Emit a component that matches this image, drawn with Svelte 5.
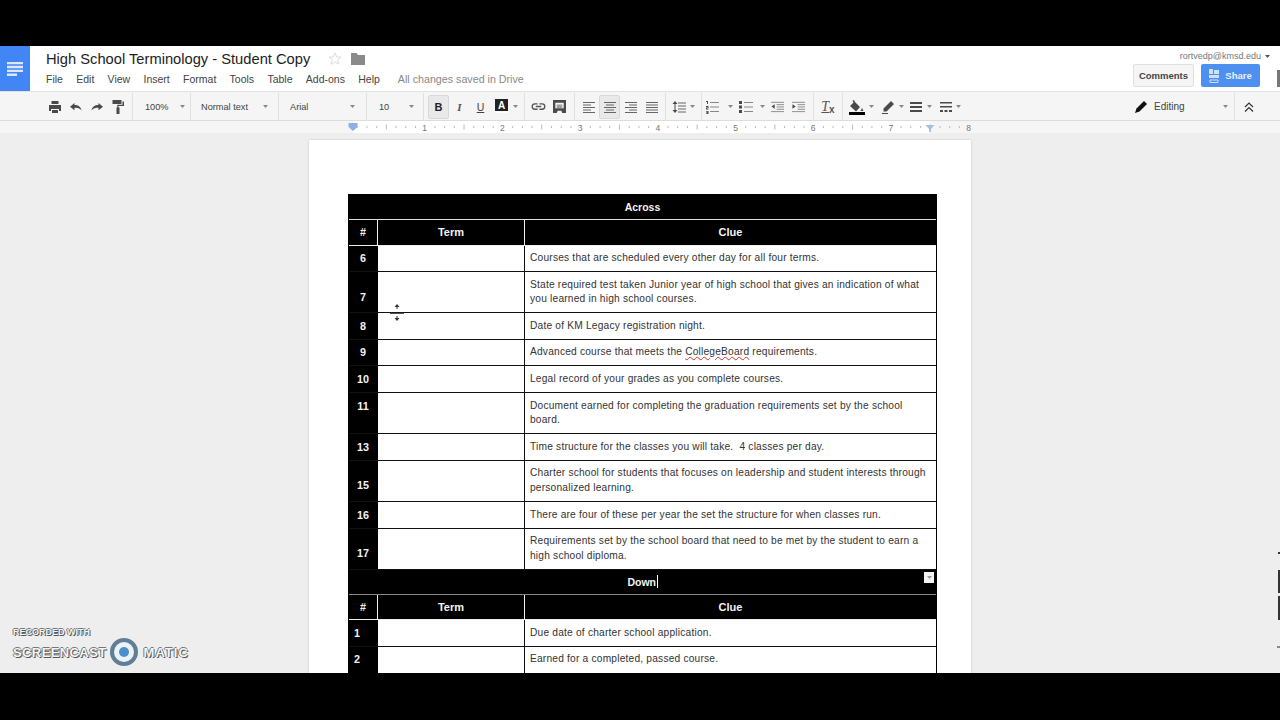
<script>
  const menus = ['File','Edit','View','Insert','Format','Tools','Table','Add-ons','Help'];
  const across = [
    { n:'6', a:'mid', lines:['Courses that are scheduled every other day for all four terms.'] },
    { n:'7', a:'end', lines:['State required test taken Junior year of high school that gives an indication of what','you learned in high school courses.'] },
    { n:'8', a:'mid', lines:['Date of KM Legacy registration night.'] },
    { n:'9', a:'mid', board:true },
    { n:'10', a:'mid', lines:['Legal record of your grades as you complete courses.'] },
    { n:'11', a:'tp', lines:['Document earned for completing the graduation requirements set by the school','board.'] },
    { n:'13', a:'mid', lines:['Time structure for the classes you will take.\u00a0 4 classes per day.'] },
    { n:'15', a:'end', lines:['Charter school for students that focuses on leadership and student interests through','personalized learning.'] },
    { n:'16', a:'mid', lines:['There are four of these per year the set the structure for when classes run.'] },
    { n:'17', a:'end', lines:['Requirements set by the school board that need to be met by the student to earn a','high school diploma.'] }
  ];
  const down = [
    { n:'1', lines:['Due date of charter school application.'] },
    { n:'2', lines:['Earned for a completed, passed course.'] }
  ];
  const inch = 77.7;
  const rulerTicks = [];
  for (let i = 0; i <= 64; i++) {
    if (i % 8 === 0) continue;
    const h = i % 4 === 0 ? 5 : 2;
    rulerTicks.push({ x: 347 + (i / 8) * inch, h });
  }
  const rulerNums = [1,2,3,4,5,6,7,8];
</script>

{#snippet arrow()}
  <svg class="arr" viewBox="0 0 5 3" width="5" height="3"><path d="M0 0h5L2.5 3z"/></svg>
{/snippet}

{#snippet lines(d)}
  <svg class="ic" viewBox="0 0 14 14" width="14" height="14"><path class="ln" d={d}/></svg>
{/snippet}

<div class="app">
  <div class="blackbar bar-top"></div>

  <header class="head">
    <div class="logo">
      <svg viewBox="0 0 16 12" width="16" height="14" preserveAspectRatio="none"><path d="M0 0h16v2H0zM0 3.300h16v2H0zM0 6.600h16v2H0zM0 9.900h10v2H0z"/></svg>
    </div>
    <div class="titles">
      <div class="titlerow">
        <span class="title">High School Terminology - Student Copy</span>
        <svg class="star" viewBox="0 0 14 14" width="14" height="14"><path d="M7 1l1.800 4h4.200l-3.300 2.800 1.200 4.400L7 9.800l-3.900 2.400 1.200-4.400L1 5h4.200z"/></svg>
        <svg class="folder" viewBox="0 0 14 12" width="14" height="12"><path d="M0 0h5.500l1.500 2H14v10H0z"/></svg>
      </div>
      <nav class="menu">
        {#each menus as m}<span>{m}</span>{/each}
        <span class="saved">All changes saved in Drive</span>
      </nav>
    </div>
    <div class="account">
      <div class="email">rortvedp@kmsd.edu <svg class="arr dark" viewBox="0 0 5 3" width="5" height="3"><path d="M0 0h5L2.500 3z"/></svg></div>
      <div class="btns">
        <span class="comments">Comments</span>
        <span class="share">
          <svg viewBox="0 0 10 14" width="10" height="14"><path d="M0 0h4v5H0zM5 1h5v4H5zM0 6h10v3H0z" fill="#cfe0fb"/><path d="M1 11h8v2.500H1z" fill="none" stroke="#cfe0fb"/></svg>
          Share
        </span>
      </div>
    </div>
    <span class="sliver"></span>
  </header>

  <div class="toolbar">
    <div class="tg g1">
      <span class="ib"><svg class="ic" viewBox="0 0 14 14" width="14" height="14"><path d="M3.500 1h7v3h-7zM1 5h12v6h-2V9H3v2H1zM4 10h6v3H4z"/></svg></span>
      <span class="ib"><svg class="ic" viewBox="0 0 14 14" width="14" height="14"><path d="M5.500 3L1 6.700l4.500 3.600V8c3-.5 5.300.4 7 2.600C12 7 9.300 5 5.500 5z"/></svg></span>
      <span class="ib"><svg class="ic" viewBox="0 0 14 14" width="14" height="14"><path d="M8.500 3l4.500 3.700-4.500 3.600V8c-3-.5-5.300.4-7 2.600C2 7 4.700 5 8.500 5z"/></svg></span>
      <span class="ib"><svg class="ic" viewBox="0 0 14 14" width="14" height="14"><path d="M1.500 0h9v4h-9zM11.500 1.500H13V6H7.500v1.500H8.500V14h-3V7.500h.8V4.800H11.500z"/></svg></span>
    </div>
    <div class="tg g2"><span class="lab">100%</span>{@render arrow()}</div>
    <div class="tg g3"><span class="lab">Normal text</span>{@render arrow()}</div>
    <div class="tg g4"><span class="lab arial">Arial</span>{@render arrow()}</div>
    <div class="tg g5"><span class="lab">10</span>{@render arrow()}</div>
    <div class="tg g6">
      <span class="ib on b">B</span>
      <span class="ib i">I</span>
      <span class="ib u">U</span>
      <span class="ib a"><span class="ablk">A</span></span>
      <span class="tarr">{@render arrow()}</span>
    </div>
    <div class="tg g7">
      <span class="ib"><svg class="ic" viewBox="0 0 16 10" width="15" height="9"><path class="ln thick" d="M7 2H4a3 3 0 0 0 0 6h3M9 2h3a3 3 0 0 1 0 6H9M5 5h6"/></svg></span>
      <span class="ib"><svg class="ic" viewBox="0 0 14 14" width="13" height="13"><path d="M0 0h14v14H10l-1-2.500H5L4 14H0zM2.500 3v6h9V3zM4 5h6v1H4zM4 7h6v1H4z" fill-rule="evenodd"/></svg></span>
    </div>
    <div class="tg g8">
      <span class="ib">{@render lines('M1 2.500h12M1 5h8M1 7.500h12M1 10h8M1 12.500h12')}</span>
      <span class="ib on">{@render lines('M1 2.500h12M3 5h8M1 7.500h12M3 10h8M1 12.500h12')}</span>
      <span class="ib">{@render lines('M1 2.500h12M5 5h8M1 7.500h12M5 10h8M1 12.500h12')}</span>
      <span class="ib">{@render lines('M1 2.500h12M1 5h12M1 7.500h12M1 10h12M1 12.500h12')}</span>
    </div>
    <div class="tg g9">
      <span class="ib"><svg class="ic" viewBox="0 0 14 14" width="14" height="14"><path class="ln" d="M6 3h8M6 6h8M6 9h8M6 12h8"/><path d="M3 1l2.500 3h-2v6h2L3 13 .5 10h2V4h-2z"/></svg></span>
      <span class="tarr">{@render arrow()}</span>
    </div>
    <div class="tg g10">
      <span class="ib n"><svg class="ic" viewBox="0 0 14 14" width="14" height="14"><path class="ln light" d="M5 2.500h9M5 7h9M5 11.500h9"/><path d="M1 1h2v3H2V2H1zM1 6h2.500v2H2v.5h1.500V9.500H1V7.500h1.500V7H1zM1 11h2.500v3H1v-.8h1.500v-.3H1.500v-.8h1v-.3H1z"/></svg></span>
      <span class="tarr a2">{@render arrow()}</span>
      <span class="ib n"><svg class="ic" viewBox="0 0 14 14" width="14" height="14"><path class="ln light" d="M5 2.500h9M5 7h9M5 11.500h9"/><path d="M0 1h3v3H0zM0 5.500h3v3H0zM0 10h3v3H0z"/></svg></span>
      <span class="tarr a3">{@render arrow()}</span>
      <span class="ib m"><svg class="ic" viewBox="0 0 14 14" width="13" height="13"><path class="ln light" d="M0 2.500h14M6 5h8M6 7.500h8M6 10h8M0 12.500h14"/><path d="M4 4.500v5L.5 7z"/></svg></span>
      <span class="ib m"><svg class="ic" viewBox="0 0 14 14" width="13" height="13"><path class="ln light" d="M0 2.500h14M6 5h8M6 7.500h8M6 10h8M0 12.500h14"/><path d="M.5 4.500v5L4 7z"/></svg></span>
    </div>
    <div class="tg g11"><span class="tx">T<small>x</small></span></div>
    <div class="tg g12">
      <span class="ib fill">
        <svg class="ic" viewBox="0 0 16 12" width="16" height="12"><path d="M5 0l1 2 5 5-4 4.500-6-5.500 3.500-3.500L3.500.8zM13 8l1.500 3h-3z"/></svg>
        <i class="swatch"></i>
      </span>
      <span class="tarr a4">{@render arrow()}</span>
      <span class="ib"><svg class="ic" viewBox="0 0 14 14" width="14" height="14"><path d="M10 1l3 3-7.500 7.500H2.500v-3zM1 13h6v1H1z"/></svg></span>
      <span class="tarr a5">{@render arrow()}</span>
      <span class="ib"><svg class="ic" viewBox="0 0 14 12" width="14" height="12"><path d="M1 1h12v2H1zM1 5h12v2H1zM1 9h12v2H1z"/></svg></span>
      <span class="tarr a6">{@render arrow()}</span>
      <span class="ib"><svg class="ic" viewBox="0 0 14 12" width="14" height="12"><path d="M1 1h12v1.500H1zM1 5h12v1.500H1zM1 9h3v2H1zM5.500 9h3v2h-3zM10 9h3v2h-3z"/></svg></span>
      <span class="tarr a7">{@render arrow()}</span>
    </div>
    <div class="tspace"></div>
    <div class="tg editing">
      <svg class="pencil" viewBox="0 0 12 12" width="12" height="12"><path d="M9 0l3 3-7.500 7.500L0 12l1.500-4.500z"/></svg>
      <span class="elab">Editing</span>
      {@render arrow()}
    </div>
    <div class="tg collapse">
      <svg viewBox="0 0 10 10" width="10" height="10"><path class="chev" d="M1 5l4-4 4 4M1 9.500l4-4 4 4"/></svg>
    </div>
  </div>

  <div class="ruler">
    <svg viewBox="0 0 1280 12" width="1280" height="12">
      <rect x="353" y="0" width="577" height="12" fill="#fff"/>
      {#each rulerTicks as t}
        <rect x={t.x} y={6 - t.h / 2} width="1" height={t.h} fill="#bbb"/>
      {/each}
      {#each rulerNums as n}
        <text x={347 + n * inch} y="10" class="rnum">{n}</text>
      {/each}
      <path d="M348.500 2h9v4l-4.500 4-4.500-4z" fill="#8fb0e6"/>
      <path d="M925.500 4h9l-3.500 4v3h-2V8z" fill="#a9bfe0"/>
    </svg>
  </div>

  <main class="canvas">
    <div class="page">
      <div class="tbl">
        <div class="band first">Across</div>
        <div class="row hd">
          <div class="c num">#</div><div class="c">Term</div><div class="c">Clue</div>
        </div>
        {#each across as r}
          <div class="row">
            <div class="c num {r.a}">{r.n}</div>
            <div class="c term"></div>
            <div class="c clue">
              {#if r.board}
                Advanced course that meets the <span class="sp">CollegeBoard</span> requirements.
              {:else}
                {#each r.lines as l}<div>{l}</div>{/each}
              {/if}
            </div>
          </div>
        {/each}
        <div class="band dn">
          <span class="dw">Down<i class="caret"></i></span>
          <span class="widget"><svg viewBox="0 0 5 3" width="5" height="3"><path d="M0 0h5L2.500 3z" fill="#999"/></svg></span>
        </div>
        <div class="row hd">
          <div class="c num">#</div><div class="c">Term</div><div class="c">Clue</div>
        </div>
        {#each down as r}
          <div class="row">
            <div class="c num left">{r.n}</div>
            <div class="c term"></div>
            <div class="c clue">{#each r.lines as l}<div>{l}</div>{/each}</div>
          </div>
        {/each}
      </div>
    </div>
    <svg class="cursor" viewBox="0 0 16 20" width="16" height="20"><path d="M1 9.500h14v1.300H1z" fill="#222"/><path d="M8 1l2.500 3H8.500v2h-1V4H5.500zM8 18l2.500-3H8.500v-2h-1v2H5.500z" fill="#333"/></svg>
    <span class="mark m1"></span><span class="mark m2"></span><span class="mark m3"></span><span class="mark m4"></span>
    <div class="wm">
      <div class="wm1">RECORDED WITH</div>
      <div class="wm2">
        <span>SCREENCAST</span>
        <svg viewBox="0 0 28 28" width="28" height="28"><circle cx="14" cy="14" r="12" fill="#eef2f5" stroke="#5f7f98" stroke-width="4"/><circle cx="14" cy="14" r="5" fill="#4a90d0"/></svg>
        <span class="matic">MATIC</span>
      </div>
    </div>
  </main>

  <div class="blackbar bar-bottom"></div>
</div>

<style>
  :global(body) { margin: 0; background: #000; overflow: hidden; }
  .app { width: 1280px; height: 720px; display: flex; flex-direction: column; font-family: "Liberation Sans", Arial, sans-serif; overflow: hidden; }
  .blackbar { background: #000; flex: none; }
  .bar-top { height: 46px; }
  .bar-bottom { height: 47px; }

  .head { height: 45px; flex: none; background: #fff; display: flex; position: relative; border-bottom: 1px solid #e2e2e2; }
  .logo { width: 30px; background: #4285f4; display: flex; align-items: center; justify-content: center; }
  .logo path { fill: #dbe7fc; }
  .titles { margin-left: 16px; flex: 1; }
  .titlerow { display: flex; align-items: center; height: 20px; margin-top: 3px; }
  .title { font-size: 14.700px; color: #222; width: 282px; white-space: nowrap; }
  .star { fill: #fff; stroke: #ddd; }
  .folder { fill: #8a8a8a; margin-left: 9px; }
  .menu { display: flex; gap: 13.300px; font-size: 10.500px; color: #444; margin-top: 4px; }
  .saved { color: #888; margin-left: 4.700px; font-size: 10.700px; }
  .account { width: 147px; flex: none; margin-right: 20px; display: flex; flex-direction: column; align-items: flex-end; }
  .email { font-size: 9px; color: #777; margin-top: 5px; margin-right: -10px; display: flex; align-items: center; gap: 4px; }
  .btns { display: flex; gap: 7px; margin-top: 3px; }
  .comments { width: 59px; height: 21px; border: 1px solid #e0e0e0; background: #f5f5f5; color: #444; font-weight: bold; font-size: 9.500px; display: flex; align-items: center; justify-content: center; border-radius: 2px; }
  .share { width: 59px; height: 23px; background: #4d90f0; color: #e8f0fe; font-weight: bold; font-size: 9.500px; display: flex; align-items: center; justify-content: center; gap: 6px; border-radius: 2px; }
  .sliver { position: absolute; right: 0; top: 24px; width: 3px; height: 17px; background: #777; }

  .toolbar { height: 27px; padding-top: 1px; flex: none; background: #f5f5f5; border-bottom: 1px solid #dcdcdc; display: flex; align-items: stretch; padding-left: 44px; }
  .tg { display: flex; align-items: center; border-right: 1px solid #e0e0e0; box-sizing: border-box; position: relative; font-size: 9px; color: #444; }
  .g1 { width: 89px; }
  .g2 { width: 58px; padding-left: 12px; }
  .g3 { width: 88px; padding-left: 10px; }
  .g4 { width: 88px; padding-left: 11px; }
  .g5 { width: 57px; padding-left: 12px; }
  .g6 { width: 101px; padding-left: 4px; }
  .g7 { width: 50px; padding-left: 3px; }
  .g8 { width: 91px; padding-left: 3px; }
  .g9 { width: 36px; padding-left: 2px; }
  .g10 { width: 112px; padding-left: 1px; }
  .g11 { width: 29px; justify-content: center; }
  .g12 { width: 200px; padding-left: 3px; border-right: none; }
  .tspace { width: 92px; }
  .lab { font-size: 9.200px; color: #444; }
  .g2 .lab { width: 35px; }
  .g3 .lab { width: 62px; }
  .g4 .lab { width: 60px; }
  .g5 .lab { width: 30px; }
  .arr { fill: #888; flex: none; }
  .arr.dark { fill: #555; }
  .ib { width: 21px; height: 27px; flex: none; display: flex; align-items: center; justify-content: center; box-sizing: border-box; position: relative; }
  .ib.on { background: #e9e9e9; border: 1px solid #d8d8d8; border-radius: 2px; height: 24px; margin-top: 0; }
  .ic { fill: #4a4a4a; }
  .ln { fill: none; stroke: #666; stroke-width: 1; }
  .ln.light { stroke: #888; }
  .ln.thick { stroke: #555; stroke-width: 1.500; }
  .b { font-weight: bold; font-size: 11px; color: #222; }
  .i { font-style: italic; font-size: 11px; font-family: "Liberation Serif", serif; font-weight: bold; color: #555; }
  .u { text-decoration: underline; font-size: 10.500px; color: #444; }
  .ablk { background: #222; color: #fff; width: 13px; height: 12px; font-size: 10px; font-weight: bold; display: flex; align-items: center; justify-content: center; box-shadow: 0 2px 0 #fff; margin-top: -3px; }
  .tarr { display: flex; align-items: center; width: 9px; margin-left: 1px; flex: none; }
  .a2 { width: 9px; margin-left: 7px; }
  .a3 { width: 6.500px; margin-left: 5px; }
  .a4 { width: 8px; margin-left: 0; padding-left: 2px; }
  .a5 { width: 6px; margin-left: 1px; margin-right: 0; }
  .a6 { width: 6px; margin-left: 1px; margin-right: 2px; }
  .a7 { width: 6px; margin-left: 0; }
  .ib.n { width: 18px; }
  .ib.m { width: 21px; }
  .tx { font-family: "Liberation Serif", serif; font-style: italic; font-size: 14px; color: #555; text-decoration: underline; }
  .tx small { font-style: normal; font-family: "Liberation Sans", sans-serif; font-size: 10px; vertical-align: -2px; font-weight: bold; }
  .fill { flex-direction: column; padding-top: 2px; }
  .swatch { width: 16px; height: 3px; background: #000; display: block; }
  .editing { width: 100px; position: relative; }
  .pencil { fill: #111; flex: none; }
  .elab { font-size: 10px; color: #444; margin-left: 7px; width: 69px; }
  .collapse { width: 30px; border: none; justify-content: center; padding-right: 2px; }
  .chev { fill: none; stroke: #333; stroke-width: 1.200; }

  .ruler { height: 12px; flex: none; background: #f5f5f5; }
  .ruler svg { display: block; }
  .rnum { font-size: 8.500px; fill: #777; text-anchor: middle; font-family: "Liberation Sans", sans-serif; }

  .canvas { flex: 1; min-height: 0; background: #eee; position: relative; overflow: hidden; }
  .page { width: 662px; height: 700px; margin: 7px auto 0; background: #fff; box-shadow: 0 0 2px rgba(0,0,0,.2); padding: 54px 0 0 39px; box-sizing: border-box; }
  .tbl { width: 589px; background: #fff; border-right: 1px solid #000; border-left: 1px solid #000; box-sizing: border-box; font-size: 10.200px; color: #333; }
  .band { height: 25px; background: #000; color: #f4f4f4; font-weight: bold; font-size: 10.500px; display: flex; align-items: center; justify-content: center; box-sizing: border-box; border-bottom: 1px solid #ddd; position: relative; }
  .band.first { height: 26px; }
  .dn { border-bottom-color: #888; }
  .dw { display: flex; align-items: center; }
  .caret { width: 1px; height: 13px; background: #fff; display: block; margin-left: 0.500px; }
  .widget { position: absolute; right: 2px; top: 2px; width: 10px; height: 11px; background: #f2f2f2; display: flex; align-items: center; justify-content: center; }
  .row { display: grid; grid-template-columns: 29px 147px 1fr; border-bottom: 1px solid #111; line-height: 14.600px; }
  .c { padding: 5.500px 5px; min-width: 0; }
  .num { background: #000; color: #f2f2f2; font-weight: bold; font-size: 10.800px; text-align: center; border-right: 1px solid #000; padding: 5.500px 0; display: flex; justify-content: center; }
  .num.mid { align-items: center; }
  .num.end { align-items: flex-end; padding-bottom: 8px; }
  .num.tp { align-items: flex-start; }
  .num.left { justify-content: flex-start; padding-left: 5px; align-items: center; }
  .term { border-right: 1px solid #111; }
  .clue { white-space: nowrap; letter-spacing: 0.200px; }
  .sp { text-decoration: underline wavy #c33 1px; text-underline-offset: 1px; }
  .hd { height: 25.500px; background: #000; color: #f4f4f4; font-weight: bold; font-size: 11px; text-align: center; border-bottom: 1px solid #eee; box-sizing: border-box; }
  .hd .c { padding: 0; display: flex; align-items: center; justify-content: center; border-right: 1px solid #eee; }
  .hd .c:last-child { border-right: none; }
  .hd .num { border-right-color: #eee; }

  .cursor { position: absolute; left: 389px; top: 170px; }
  .mark { position: absolute; right: 0; width: 2px; background: #333; }
  .m1 { top: 419px; height: 2px; }
  .m2 { top: 437px; height: 23px; }
  .m3 { top: 463px; height: 24px; }
  .m4 { top: 513px; height: 2px; width: 3px; background: #888; }

  .wm { position: absolute; left: 13px; top: 494px; color: #f5f5f5; font-weight: bold; text-shadow: 1px 1px 0 #555, -1px 0 0 #777, 0 -1px 0 #777; }
  .wm1 { font-size: 9px; line-height: 10px; }
  .wm2 { display: flex; align-items: center; font-size: 13px; margin-top: 1px; letter-spacing: 0.400px; gap: 3px; }
  .matic { letter-spacing: 1px; margin-left: 3px; }
</style>
